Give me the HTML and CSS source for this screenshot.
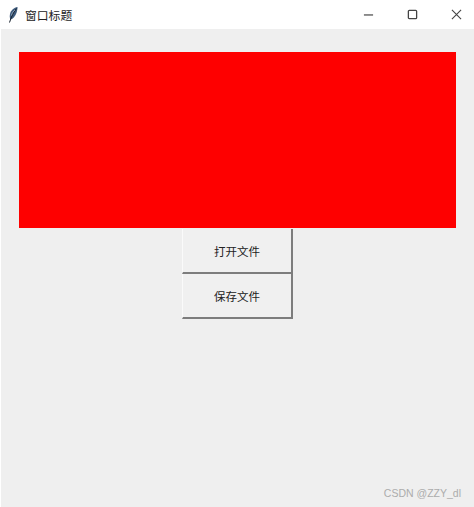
FILE: index.html
```html
<!DOCTYPE html>
<html lang="zh">
<head>
<meta charset="utf-8">
<title>窗口标题</title>
<link rel="stylesheet" href="styles.css">
</head>
<body>
<div class="window">
  <header class="titlebar">
    <svg class="feather" viewBox="0 0 12 18" width="12" height="18" aria-hidden="true">
      <path d="M10.5 1 C7 1.5 4 4 3 8 C2.5 10.5 2.8 12.5 3.4 13.5 C6 13 8.5 10 9.6 6.5 C10.2 4.5 10.6 2.5 10.5 1 Z" fill="#3d5a7c"/>
      <path d="M9.5 2.5 C7 5.5 4.5 10 2.5 16.5" fill="none" stroke="#16202c" stroke-width="1"/>
      <path d="M8 4 C6.5 5 5 7 4.4 9.5" fill="none" stroke="#9fb4c9" stroke-width=".8"/>
    </svg>
    <span class="title">窗口标题</span>
    <div class="controls">
      <svg class="ctl" viewBox="0 0 12 12" width="11" height="11" aria-hidden="true"><path d="M1 6.5H11" stroke="#444" stroke-width="1.3" fill="none"/></svg>
      <svg class="ctl" viewBox="0 0 12 12" width="11" height="11" aria-hidden="true"><rect x="1.5" y="1.5" width="9" height="9" rx="1" stroke="#444" stroke-width="1.4" fill="none"/></svg>
      <svg class="ctl" viewBox="0 0 12 12" width="11" height="11" aria-hidden="true"><path d="M1 1L11 11M11 1L1 11" stroke="#444" stroke-width="1.2" fill="none"/></svg>
    </div>
  </header>
  <main class="content">
    <div class="canvas"></div>
    <div class="actions">
      <button class="btn" type="button">打开文件</button>
      <button class="btn" type="button">保存文件</button>
    </div>
    <footer class="watermark">CSDN @ZZY_dl</footer>
  </main>
</div>
</body>
</html>
```
FILE: styles.css
```css
* { box-sizing: border-box; }
html, body { margin: 0; height: 100%; }
body {
  background: #fff;
  font-family: "Liberation Sans", "Noto Sans CJK SC", sans-serif;
  overflow: hidden;
}
.window {
  display: flex;
  flex-direction: column;
  width: 474px;
  height: 507px;
}
.titlebar {
  display: flex;
  align-items: center;
  flex: 0 0 29px;
  padding-left: 7px;
  background: #fff;
}
.feather { flex: none; }
.title {
  margin-left: 6px;
  font: 11.8px/16px "Noto Sans CJK SC", sans-serif;
  color: #222;
}
.controls {
  display: flex;
  align-items: center;
  gap: 33px;
  margin-left: auto;
  padding-right: 12px;
}
.content {
  flex: 1;
  display: flex;
  flex-direction: column;
  margin-left: 1px;
  padding: 23px 18px 0 18px;
  background: #efefef;
}
.canvas {
  flex: 0 0 176px;
  background: #fe0000;
}
.actions {
  display: flex;
  flex-direction: column;
  align-self: flex-start;
  margin-top: 1px;
  margin-left: 163px;
}
.btn {
  width: 111px;
  height: 45px;
  padding: 0;
  background: #f0f0f0;
  border: 0;
  border-left: 1px solid #fafafa;
  border-right: 2px solid #7d7d7d;
  border-bottom: 2px solid #7d7d7d;
  font: 11.5px/14px "Noto Sans CJK SC", sans-serif;
  color: #222;
}
.watermark {
  align-self: flex-end;
  margin-top: auto;
  margin-bottom: 7px;
  margin-right: -5px;
  font-size: 10.5px;
  line-height: 14px;
  color: #acacac;
}
```
